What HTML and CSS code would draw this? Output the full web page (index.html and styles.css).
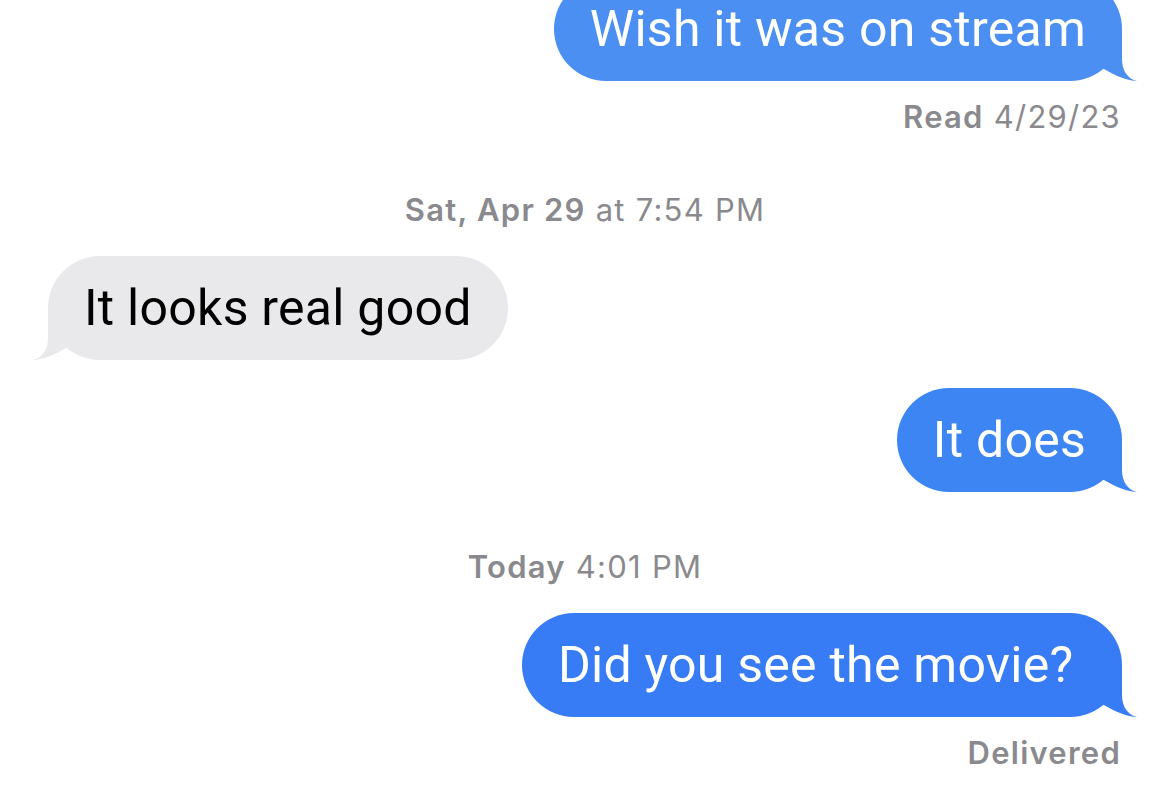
FILE: index.html
```html
<!DOCTYPE html>
<html>
    <head>
        <meta name="viewport" content="width=device-width, initial-scale=1" />
        <link rel="stylesheet" href="styles.css">
    </head>
    <body>
        <main class="thread">

            <div class="bubble sent tone-1">
                Wish it was on stream
                <svg class="tail" viewBox="0 0 40 50"><path d="M24 0 L24 28 C24 40 30 48 39 50 C30 50 18 45 4 37 L0 30 L0 0 Z"/></svg>
            </div>
            <div class="status"><b>Read</b> 4/29/23</div>

            <div class="stamp"><b>Sat, Apr 29</b> at 7:54 PM</div>

            <div class="bubble received">
                It looks real good
                <svg class="tail" viewBox="0 0 40 50"><path d="M24 0 L24 28 C24 40 30 48 39 50 C30 50 18 45 4 37 L0 30 L0 0 Z"/></svg>
            </div>

            <div class="bubble sent tone-2">
                It does
                <svg class="tail" viewBox="0 0 40 50"><path d="M24 0 L24 28 C24 40 30 48 39 50 C30 50 18 45 4 37 L0 30 L0 0 Z"/></svg>
            </div>

            <div class="stamp"><b>Today</b> 4:01 PM</div>

            <div class="bubble sent tone-3">
                Did you see the movie?&nbsp;
                <svg class="tail" viewBox="0 0 40 50"><path d="M24 0 L24 28 C24 40 30 48 39 50 C30 50 18 45 4 37 L0 30 L0 0 Z"/></svg>
            </div>
            <div class="status"><b>Delivered</b></div>

        </main>
    </body>
</html>
```

FILE: styles.css
```css
* {
    padding: 0;
    margin: 0;
    box-sizing: border-box;
}

:root {
    --meta: #8a8a8e;
    --gray-bubble: #e9e9eb;
}

body {
    background: white;
    font-family: "Roboto", "Liberation Sans", sans-serif;
    overflow: hidden;
}

main.thread {
    display: flex;
    flex-direction: column;
    padding: 0 48px;
    margin-top: -23px;
}

/* message bubbles */
.bubble {
    position: relative;
    font-size: 50px;
    line-height: 60px;
    letter-spacing: 0.25px;
    padding: 22px 36px;
    border-radius: 52px;
    background: var(--bubble);
    white-space: nowrap;
}
.bubble + .bubble {
    margin-top: 28px;
}
.bubble.sent {
    align-self: flex-end;
    color: white;
}
.bubble.received {
    --bubble: var(--gray-bubble);
    align-self: flex-start;
    color: black;
}

.tone-1 { --bubble: #4a8ff1; }
.tone-2 { --bubble: #3e85f4; }
.tone-3 { --bubble: #377bf5; }

.tail {
    position: absolute;
    bottom: 0;
    right: -16px;
    width: 40px;
    height: 50px;
    fill: var(--bubble);
}
.bubble.received .tail {
    right: auto;
    left: -16px;
    transform: scaleX(-1);
}

/* timestamps and receipts */
.status,
.stamp {
    font-family: "Inter", "Roboto", sans-serif;
    font-size: 31px;
    line-height: 36px;
    letter-spacing: 1.25px;
    color: var(--meta);
}
.status b,
.stamp b {
    font-weight: 600;
}

.status {
    align-self: flex-end;
    margin-top: 18px;
    margin-right: 1px;
}

.stamp {
    align-self: center;
    margin-top: 57px;
    margin-bottom: 28px;
}
```
